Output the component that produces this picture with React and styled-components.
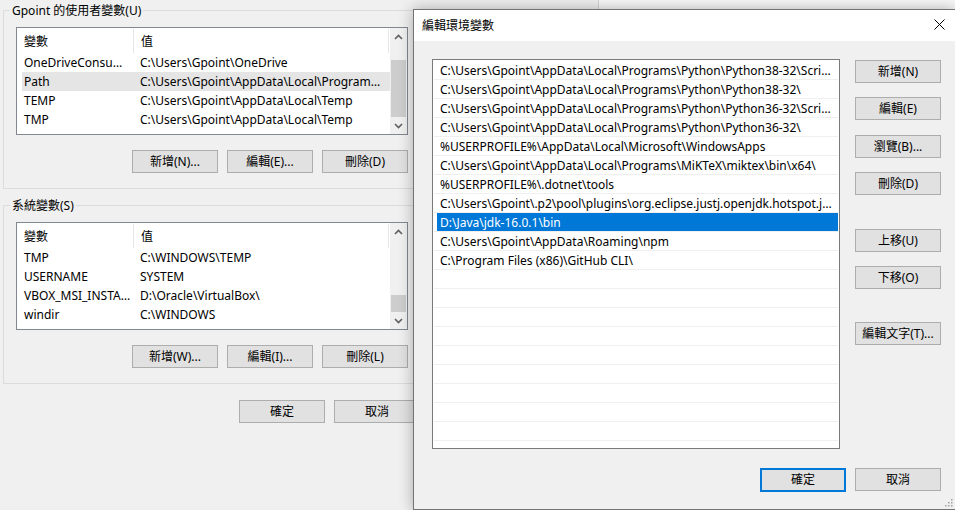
import React from "react";
import styled, { createGlobalStyle } from "styled-components";

const GlobalStyle = createGlobalStyle`
  html, body {
    margin: 0;
    padding: 0;
  }
  body {
    width: 955px;
    height: 510px;
    overflow: hidden;
    background: #f9f9f9;
    font-family: "Segoe UI", "Noto Sans", "Noto Sans CJK TC", sans-serif;
    font-size: 12px;
    color: #000;
  }
  * {
    box-sizing: border-box;
  }
`;

const userVars = [
  { name: "OneDriveConsumer", value: "C:\\Users\\Gpoint\\OneDrive" },
  {
    name: "Path",
    value:
      "C:\\Users\\Gpoint\\AppData\\Local\\Programs\\Python\\Python38-32\\Scripts\\;C:\\Users\\Gpoint",
    active: true,
  },
  { name: "TEMP", value: "C:\\Users\\Gpoint\\AppData\\Local\\Temp" },
  { name: "TMP", value: "C:\\Users\\Gpoint\\AppData\\Local\\Temp" },
];

const systemVars = [
  { name: "TMP", value: "C:\\WINDOWS\\TEMP" },
  { name: "USERNAME", value: "SYSTEM" },
  { name: "VBOX_MSI_INSTALL_PATH", value: "D:\\Oracle\\VirtualBox\\" },
  { name: "windir", value: "C:\\WINDOWS" },
];

const paths = [
  "C:\\Users\\Gpoint\\AppData\\Local\\Programs\\Python\\Python38-32\\Scripts\\",
  "C:\\Users\\Gpoint\\AppData\\Local\\Programs\\Python\\Python38-32\\",
  "C:\\Users\\Gpoint\\AppData\\Local\\Programs\\Python\\Python36-32\\Scripts\\",
  "C:\\Users\\Gpoint\\AppData\\Local\\Programs\\Python\\Python36-32\\",
  "%USERPROFILE%\\AppData\\Local\\Microsoft\\WindowsApps",
  "C:\\Users\\Gpoint\\AppData\\Local\\Programs\\MiKTeX\\miktex\\bin\\x64\\",
  "%USERPROFILE%\\.dotnet\\tools",
  "C:\\Users\\Gpoint\\.p2\\pool\\plugins\\org.eclipse.justj.openjdk.hotspot.jre.full.win32.x86_64_16.0.1.v20210528-1205\\jre\\bin",
  "D:\\Java\\jdk-16.0.1\\bin",
  "C:\\Users\\Gpoint\\AppData\\Roaming\\npm",
  "C:\\Program Files (x86)\\GitHub CLI\\",
];
const SELECTED_PATH = 8;
const PATH_ROWS = 21;

const sideButtons = [
  { label: "新增(N)", gap: 1 },
  { label: "編輯(E)", gap: 14 },
  { label: "瀏覽(B)...", gap: 15 },
  { label: "刪除(D)", gap: 14 },
  { label: "上移(U)", gap: 34 },
  { label: "下移(O)", gap: 14 },
  { label: "編輯文字(T)...", gap: 33 },
];

const Desktop = styled.div`
  position: relative;
  width: 955px;
  height: 510px;
  overflow: hidden;
`;

/* the environment variables window sitting behind the dialog */
const BackWindow = styled.div`
  position: absolute;
  left: 0;
  top: 0;
  width: 599px;
  height: 510px;
  padding: 2px 0 0 3px;
  background: #f0f0f0;
  border-right: 1px solid #d6d6d6;
`;

const BackColumn = styled.div`
  width: 417px;
  display: flex;
  flex-direction: column;
`;

const GroupBox = styled.fieldset`
  margin: ${(p) => p.$top || 0}px 0 0 0;
  padding: 9px 11px 15px 12px;
  border: 1px solid #dcdcdc;
  min-width: 0;
`;

const GroupLabel = styled.legend`
  margin-left: -6px;
  padding: 0 2px;
  line-height: 16px;
  font-size: 12px;

  & span {
    position: relative;
    top: 1px;
  }
`;

const GroupInner = styled.div`
  display: flex;
  flex-direction: column;
  gap: 15px;
`;

const ButtonRow = styled.div`
  display: flex;
  justify-content: flex-end;
  gap: ${(p) => p.$gap || 9}px;
  margin-top: ${(p) => p.$top || 0}px;
`;

const Button = styled.button`
  width: 86px;
  height: ${(p) => (p.$default ? 24 : 23)}px;
  margin: ${(p) => p.$top || 0}px 0 0 0;
  padding: 0;
  background: #e1e1e1;
  border: ${(p) => (p.$default ? "2px solid #0078d7" : "1px solid #adadad")};
  font-family: inherit;
  font-size: 12px;
  color: #000;
  line-height: 1;
  flex-shrink: 0;
`;

const ListView = styled.div`
  width: 392px;
  height: 108px;
  border: 1px solid #828790;
  background: #fff;
  display: flex;
`;

const ListBody = styled.div`
  flex: 1;
  min-width: 0;
  display: flex;
  flex-direction: column;
`;

const HeaderRow = styled.div`
  display: flex;
  height: 25px;
  padding-top: 1px;
`;

const HeaderCell = styled.div`
  width: ${(p) => p.$width}px;
  padding: 1px 0 0 7px;
  line-height: 24px;
  border-right: 1px solid #e5e5e5;
`;

const VarRow = styled.div`
  display: flex;
  height: 19px;
  margin-left: 5px;
  background: ${(p) => (p.$active ? "#e5e5e5" : "transparent")};
`;

const VarCell = styled.div`
  width: ${(p) => (p.$width ? `${p.$width}px` : "auto")};
  flex: ${(p) => (p.$width ? "none" : 1)};
  min-width: 0;
  padding: 0 ${(p) => p.$right}px 0 ${(p) => p.$left}px;
  line-height: 19px;
  white-space: nowrap;
  overflow: hidden;
  text-overflow: ellipsis;
`;

const ScrollBar = styled.div`
  width: 17px;
  display: flex;
  flex-direction: column;
  background: #f0f0f0;
`;

const ScrollArrow = styled.div`
  height: 17px;
  display: flex;
  align-items: center;
  justify-content: center;
`;

const ScrollTrack = styled.div`
  flex: 1;
  display: flex;
  flex-direction: column;
  justify-content: flex-end;
`;

const ScrollThumb = styled.div`
  height: ${(p) => p.$height}px;
  margin: 0 1px;
  background: #cdcdcd;
`;

/* the edit dialog in front */
const Dialog = styled.div`
  position: absolute;
  left: 413px;
  top: 9px;
  width: 543px;
  height: 501px;
  border: 1px solid #737373;
  background: #f0f0f0;
  box-shadow: 0 0 14px rgba(0, 0, 0, 0.3);
  display: flex;
  flex-direction: column;
`;

const TitleBar = styled.div`
  height: 31px;
  background: #fff;
  display: flex;
  align-items: center;
  justify-content: space-between;
  padding: 0 10px 2px 8px;
`;

const Title = styled.span`
  font-size: 12px;
`;

const DialogBody = styled.div`
  display: grid;
  grid-template-columns: 408px 86px;
  column-gap: 15px;
  row-gap: 19px;
  padding: 18px 14px 0 18px;
`;

const PathList = styled.div`
  height: 390px;
  border: 1px solid #7a7a7a;
  background: #fff;
  padding: 1px 1px 0;
  overflow: hidden;
`;

const PathRow = styled.div`
  display: flex;
  height: 19px;
  border-bottom: 1px solid #efefef;
`;

const PathText = styled.div`
  flex: 1;
  min-width: 0;
  height: 18px;
  margin-left: 3px;
  padding: 1px 3px 0;
  line-height: 17px;
  white-space: nowrap;
  overflow: hidden;
  text-overflow: ellipsis;
  background: ${(p) => (p.$selected ? "#0078d7" : "transparent")};
  color: ${(p) => (p.$selected ? "#fff" : "#000")};
`;

const SideButtons = styled.div`
  display: flex;
  flex-direction: column;
`;

const Footer = styled(ButtonRow)`
  grid-column: 1 / span 2;
`;

const Grip = styled.svg`
  position: absolute;
  right: 2px;
  bottom: 2px;
`;

const Chevron = ({ up }) => (
  <svg width="9" height="6" viewBox="0 0 9 6">
    <polyline
      points={up ? "1,5 4.5,1.5 8,5" : "1,1 4.5,4.5 8,1"}
      fill="none"
      stroke="#606060"
      strokeWidth="1.6"
    />
  </svg>
);

const CloseIcon = () => (
  <svg width="11" height="11" viewBox="0 0 11 11">
    <path d="M0.5 0.5 L10.5 10.5 M10.5 0.5 L0.5 10.5" stroke="#000" strokeWidth="1" />
  </svg>
);

const VarList = ({ rows, thumb }) => (
  <ListView>
    <ListBody>
      <HeaderRow>
        <HeaderCell $width={117}>變數</HeaderCell>
        <HeaderCell $width={255}>值</HeaderCell>
      </HeaderRow>
      {rows.map((r) => (
        <VarRow key={r.name} $active={r.active}>
          <VarCell $width={111} $left={2} $right={1}>
            {r.name}
          </VarCell>
          <VarCell $left={7} $right={6}>
            {r.value}
          </VarCell>
        </VarRow>
      ))}
    </ListBody>
    <ScrollBar>
      <ScrollArrow>
        <Chevron up />
      </ScrollArrow>
      <ScrollTrack>
        <ScrollThumb $height={thumb} />
      </ScrollTrack>
      <ScrollArrow>
        <Chevron />
      </ScrollArrow>
    </ScrollBar>
  </ListView>
);

export default function App() {
  const rows = Array.from({ length: PATH_ROWS }, (_, i) => paths[i] || "");
  return (
    <>
      <GlobalStyle />
      <Desktop>
        <BackWindow>
          <BackColumn>
            <GroupBox>
              <GroupLabel>
                <span>Gpoint 的使用者變數(U)</span>
              </GroupLabel>
              <GroupInner>
                <VarList rows={userVars} thumb={57} />
                <ButtonRow>
                  <Button>新增(N)...</Button>
                  <Button>編輯(E)...</Button>
                  <Button>刪除(D)</Button>
                </ButtonRow>
              </GroupInner>
            </GroupBox>
            <GroupBox $top={8}>
              <GroupLabel>
                <span>系統變數(S)</span>
              </GroupLabel>
              <GroupInner>
                <VarList rows={systemVars} thumb={17} />
                <ButtonRow>
                  <Button>新增(W)...</Button>
                  <Button>編輯(I)...</Button>
                  <Button>刪除(L)</Button>
                </ButtonRow>
              </GroupInner>
            </GroupBox>
            <ButtonRow $top={16}>
              <Button>確定</Button>
              <Button>取消</Button>
            </ButtonRow>
          </BackColumn>
        </BackWindow>

        <Dialog>
          <TitleBar>
            <Title>編輯環境變數</Title>
            <CloseIcon />
          </TitleBar>
          <DialogBody>
            <PathList>
              {rows.map((p, i) => (
                <PathRow key={i}>
                  <PathText $selected={i === SELECTED_PATH}>{p}</PathText>
                </PathRow>
              ))}
            </PathList>
            <SideButtons>
              {sideButtons.map((b) => (
                <Button key={b.label} $top={b.gap}>
                  {b.label}
                </Button>
              ))}
            </SideButtons>
            <Footer>
              <Button $default>確定</Button>
              <Button>取消</Button>
            </Footer>
          </DialogBody>
          <Grip width="9" height="9" viewBox="0 0 9 9">
            {[
              [7, 1],
              [7, 4],
              [4, 4],
              [7, 7],
              [4, 7],
              [1, 7],
            ].map(([x, y]) => (
              <rect key={`${x}-${y}`} x={x} y={y} width="1.5" height="1.5" fill="#a0a0a0" />
            ))}
          </Grip>
        </Dialog>
      </Desktop>
    </>
  );
}
